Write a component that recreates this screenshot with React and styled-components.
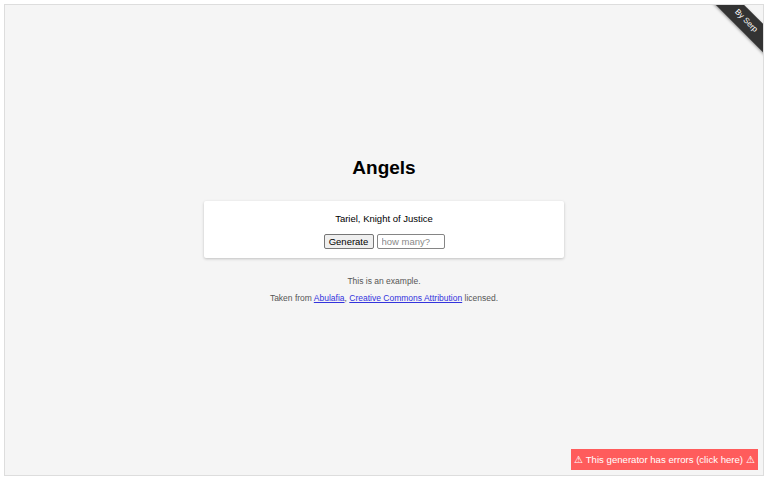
import styled, { createGlobalStyle } from "styled-components";

const GlobalStyle = createGlobalStyle`
	html, body {
		margin: 0;
		padding: 0;
		background: #ffffff;
	}
	body {
		padding: 4px;
		font-family: "Liberation Sans", Arial, sans-serif;
		box-sizing: border-box;
	}
`;

const Frame = styled.div`
	position: relative;
	box-sizing: border-box;
	height: 472px;
	border: 1px solid #dddddd;
	background-color: #f5f5f5;
	padding-top: 151px;
	display: flex;
	flex-direction: column;
	align-items: center;
	overflow: hidden;
`;

const RibbonHolder = styled.div`
	position: absolute;
	top: 0;
	right: 0;
	width: 62px;
	height: 62px;
	overflow: hidden;
`;

const Ribbon = styled.div`
	position: absolute;
	left: -1px;
	top: 6px;
	width: 92px;
	height: 20px;
	line-height: 20px;
	background-color: #333333;
	color: #ffffff;
	font-size: 8px;
	text-align: center;
	transform: rotate(45deg);
	box-shadow: 0 1px 3px rgba(0, 0, 0, 0.4);
`;

const Title = styled.h1`
	margin: 0;
	font-size: 19px;
	line-height: 23px;
	font-weight: bold;
	color: #000000;
`;

const Card = styled.div`
	margin-top: 22px;
	width: 360px;
	box-sizing: border-box;
	padding: 11px 0 9px;
	background-color: #ffffff;
	border-radius: 2px;
	box-shadow: 0 1px 3px rgba(0, 0, 0, 0.22);
	display: flex;
	flex-direction: column;
	align-items: center;
	gap: 8px;
`;

const Result = styled.div`
	font-size: 9.5px;
	line-height: 14px;
	color: #000000;
`;

const Controls = styled.div`
	display: flex;
	gap: 3px;
	height: 15px;
`;

const Button = styled.button`
	box-sizing: border-box;
	height: 15px;
	width: 50px;
	padding: 0;
	font-family: "Liberation Sans", Arial, sans-serif;
	font-size: 9.5px;
	color: #000000;
	background-color: #efefef;
	border: 1px solid #767676;
	border-radius: 2px;
`;

const CountInput = styled.input`
	box-sizing: border-box;
	height: 15px;
	width: 68px;
	padding: 0 4px;
	font-family: "Liberation Sans", Arial, sans-serif;
	font-size: 9.5px;
	border: 1px solid #858585;
	border-radius: 2px;
	background: #ffffff;
	&::placeholder {
		color: #8a8a8a;
	}
`;

const Note = styled.p`
	margin: ${(props) => props.$top}px 0 0;
	font-size: 8.5px;
	line-height: 11px;
	color: #555555;
	& a {
		color: #3333dd;
	}
`;

const ErrorBanner = styled.div`
	position: fixed;
	right: 10px;
	bottom: 10px;
	width: 187px;
	height: 21px;
	line-height: 21px;
	text-align: center;
	background-color: #ff5c5c;
	color: #ffffff;
	font-size: 9.6px;
	cursor: pointer;
`;

export default function App() {
	return (
		<>
			<GlobalStyle />
			<Frame>
				<RibbonHolder>
					<Ribbon>By Serp</Ribbon>
				</RibbonHolder>
				<Title>Angels</Title>
				<Card>
					<Result>Tariel, Knight of Justice</Result>
					<Controls>
						<Button>Generate</Button>
						<CountInput placeholder="how many?" />
					</Controls>
				</Card>
				<Note $top={18}>This is an example.</Note>
				<Note $top={6}>
					Taken from <a href="#">Abulafia</a>,{" "}
					<a href="#">Creative Commons Attribution</a> licensed.
				</Note>
			</Frame>
			<ErrorBanner>⚠ This generator has errors (click here) ⚠</ErrorBanner>
		</>
	);
}
